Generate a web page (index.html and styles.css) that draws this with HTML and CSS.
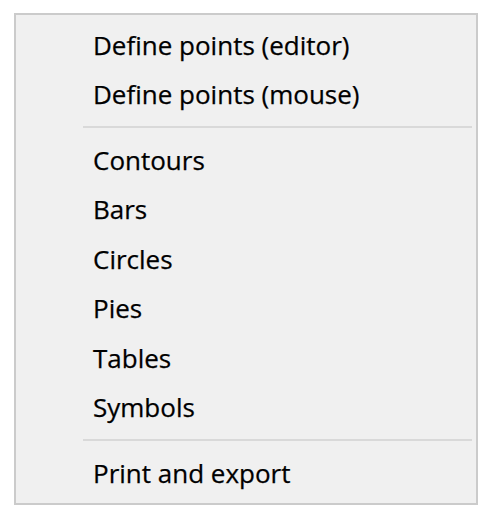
FILE: index.html
```html
<!DOCTYPE html>
<html>
<head>
<meta charset="utf-8">
<link rel="stylesheet" href="styles.css">
</head>
<body>
<div class="menu">
  <div class="item">Define points (editor)</div>
  <div class="item">Define points (mouse)</div>
  <div class="sep"></div>
  <div class="item">Contours</div>
  <div class="item">Bars</div>
  <div class="item">Circles</div>
  <div class="item">Pies</div>
  <div class="item">Tables</div>
  <div class="item">Symbols</div>
  <div class="sep"></div>
  <div class="item">Print and export</div>
</div>
</body>
</html>
```
FILE: styles.css
```css
html, body {
  margin: 0;
  padding: 0;
  background: #ffffff;
}
body {
  padding: 13px 0 0 14px;
}
.menu {
  box-sizing: border-box;
  width: 464px;
  height: 492px;
  border: 2px solid #cbcbcb;
  background: #f0f0f0;
  padding: 5px 0;
  display: flex;
  flex-direction: column;
  font-family: "Open Sans", "Noto Sans", sans-serif;
  font-size: 26px;
  color: #000000;
  -webkit-text-stroke: 0.25px #000000;
}
.item {
  height: 49.5px;
  display: flex;
  align-items: center;
  padding-left: 77px;
}
.sep {
  height: 16px;
  display: flex;
  align-items: center;
  margin: 0 4px 0 67px;
}
.sep::before {
  content: "";
  flex: 1;
  height: 2px;
  background: #d9d9d9;
}
```
